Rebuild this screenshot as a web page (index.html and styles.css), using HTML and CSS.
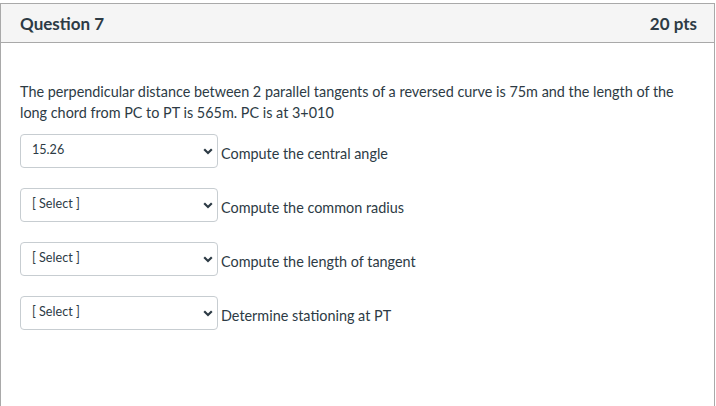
FILE: index.html
```html
<!DOCTYPE html>
<html lang="en">
<head>
<meta charset="utf-8">
<title>Question 7</title>
<link rel="stylesheet" href="styles.css">
</head>
<body>
<div class="question">
  <div class="header">
    <span class="title">Question 7</span>
    <span class="pts">20 pts</span>
  </div>
  <div class="content">
    <p class="text">The perpendicular distance between 2 parallel tangents of a reversed curve is 75m and the length of the long chord from PC to PT is 565m. PC is at 3+010</p>
    <div class="rows">
      <div class="row">
        <div class="select">
          <select><option>15.26</option></select>
          <svg class="chev" width="10" height="7" viewBox="0 0 10 7"><path d="M1.2 1.3 L5 5 L8.8 1.3" fill="none" stroke="#2d3b45" stroke-width="2.2"/></svg>
        </div>
        <span class="label">Compute the central angle</span>
      </div>
      <div class="row">
        <div class="select">
          <select><option>[ Select ]</option></select>
          <svg class="chev" width="10" height="7" viewBox="0 0 10 7"><path d="M1.2 1.3 L5 5 L8.8 1.3" fill="none" stroke="#2d3b45" stroke-width="2.2"/></svg>
        </div>
        <span class="label">Compute the common radius</span>
      </div>
      <div class="row">
        <div class="select">
          <select><option>[ Select ]</option></select>
          <svg class="chev" width="10" height="7" viewBox="0 0 10 7"><path d="M1.2 1.3 L5 5 L8.8 1.3" fill="none" stroke="#2d3b45" stroke-width="2.2"/></svg>
        </div>
        <span class="label">Compute the length of tangent</span>
      </div>
      <div class="row">
        <div class="select">
          <select><option>[ Select ]</option></select>
          <svg class="chev" width="10" height="7" viewBox="0 0 10 7"><path d="M1.2 1.3 L5 5 L8.8 1.3" fill="none" stroke="#2d3b45" stroke-width="2.2"/></svg>
        </div>
        <span class="label">Determine stationing at PT</span>
      </div>
    </div>
  </div>
</div>
</body>
</html>
```

FILE: styles.css
```css
html, body {
  margin: 0;
  padding: 0;
  background: #fff;
}
body {
  font-family: Lato, "Liberation Sans", sans-serif;
  color: #2d3b45;
  padding-top: 3px;
}
.question {
  width: 713px;
  height: 420px;
  border: 1px solid #a9a9a9;
  border-bottom: none;
}
.header {
  height: 38px;
  background: #f5f5f5;
  border-bottom: 1px solid #a9a9a9;
  display: flex;
  align-items: center;
  justify-content: space-between;
  padding: 0 17px 0 19px;
  font-weight: 700;
  font-size: 17px;
}
.content {
  padding: 38px 19px 0 19px;
}
.text {
  margin: 0;
  font-size: 14.4px;
  line-height: 21px;
  padding-right: 20px;
}
.rows {
  margin-top: 11px;
  display: flex;
  flex-direction: column;
  gap: 20px;
}
.row {
  display: flex;
  align-items: flex-start;
}
.select {
  position: relative;
  width: 198px;
  height: 34px;
}
.select select {
  appearance: none;
  -webkit-appearance: none;
  width: 100%;
  height: 100%;
  margin: 0;
  box-sizing: border-box;
  border: 1px solid #c7cdd1;
  border-radius: 4px;
  background: #fff;
  font-family: Lato, "Liberation Sans", sans-serif;
  font-size: 12.6px;
  color: #2d3b45;
  padding: 0 0 3px 11px;
}
.chev {
  position: absolute;
  left: 183px;
  top: 14px;
}
.label {
  font-size: 14.4px;
  line-height: 21px;
  margin-left: 3px;
  padding-top: 9px;
}
```
